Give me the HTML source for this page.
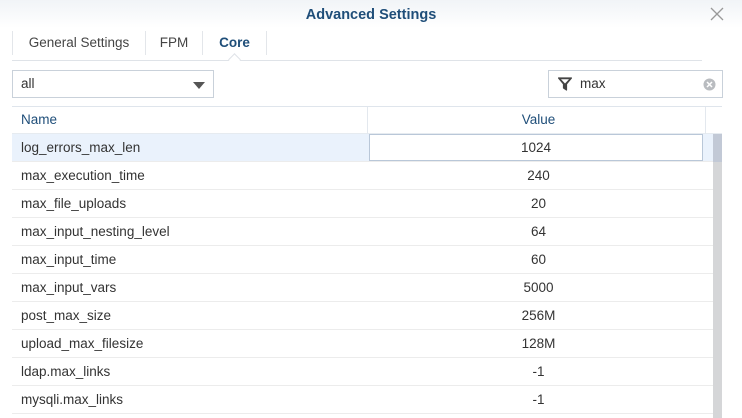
<!DOCTYPE html>
<html><head><style>
*{margin:0;padding:0;box-sizing:border-box}
body{width:742px;height:418px;overflow:hidden;background:#fff;font-family:"Liberation Sans",sans-serif;font-size:13.5px;color:#333;position:relative}
.title{position:absolute;left:0;top:0;width:742px;height:28px;background:linear-gradient(#f1f4f7,#fff);text-align:center;line-height:30px;font-weight:bold;font-size:14.5px;color:#1f4e79}
.close{position:absolute;right:18px;top:7px}
.tabs{position:absolute;left:12px;top:31px;height:30px;width:690px;border-bottom:1px solid #dfe3e8}
.tab{position:absolute;top:0;height:24px;line-height:24px;border-right:1px solid #e3e6ea;text-align:center;color:#444}
.dd{position:absolute;left:12px;top:70px;width:202px;height:28px;border:1px solid #c9d1da;line-height:26px;padding-left:8px}
.fb{position:absolute;left:548px;top:70px;width:175px;height:28px;border:1px solid #c9d1da;line-height:26px;padding-left:31px}
.th{position:absolute;left:12px;top:106px;width:710px;height:28px;border-top:1px solid #dfe5ec;border-bottom:1px solid #e6ebf0;color:#1f4e79;line-height:26px}
.row{position:absolute;left:12px;width:701px;height:28px;border-bottom:1px solid #ececec;line-height:27px}
.n{position:absolute;left:9px}
.v{position:absolute;left:358px;width:337px;text-align:center}
</style></head><body>
<div class="title">Advanced Settings</div>
<svg class="close" width="14" height="14" viewBox="0 0 14 14"><path d="M1 1L13 13M13 1L1 13" stroke="#999" stroke-width="1.3"/></svg>
<div class="tabs">
<div style="position:absolute;left:0;top:0;width:1px;height:24px;background:#e3e6ea"></div>
<div class="tab" style="left:1px;width:133px">General Settings</div>
<div class="tab" style="left:134px;width:57px">FPM</div>
<div class="tab" style="left:191px;width:64px;color:#1f4e79;font-weight:bold">Core</div>
<div style="position:absolute;left:218px;top:24px;width:9px;height:9px;background:#fff;border-left:1px solid #dfe3e8;border-top:1px solid #dfe3e8;transform:rotate(45deg)"></div>
</div>
<div class="dd">all<svg style="position:absolute;right:8px;top:11px" width="12" height="7"><path d="M0 0H12L6 7Z" fill="#555"/></svg></div>
<div class="fb"><svg style="position:absolute;left:9px;top:6px" width="14" height="14" viewBox="0 0 14 14"><path d="M0.5 1H13.5L8.5 7V13L5.5 11V7Z" fill="#444" stroke="#444" stroke-width="1.2" stroke-linejoin="round"/><path d="M3 2.2H11L7 6.5Z" fill="#fff"/></svg>max<svg style="position:absolute;right:6px;top:7px" width="13" height="13"><circle cx="6.5" cy="6.5" r="6" fill="#b9bcc0"/><path d="M4 4L9 9M9 4L4 9" stroke="#fff" stroke-width="1.5"/></svg></div>
<div class="th"><span style="position:absolute;left:9px">Name</span><span style="position:absolute;left:358px;width:337px;text-align:center">Value</span><div style="position:absolute;left:355px;top:0;width:1px;height:27px;background:#e3e8ee"></div><div style="position:absolute;left:693px;top:0;width:1px;height:27px;background:#e3e8ee"></div></div>
<div class="row" style="top:134px;background:#eaf2fc;width:710px"><span class="n">log_errors_max_len</span><div style="position:absolute;left:357px;top:0;width:334px;height:27px;background:#fff;border:1px solid #b9c7d8;text-align:center;line-height:25px">1024</div></div>
<div class="row" style="top:162px"><span class="n">max_execution_time</span><span class="v">240</span></div>
<div class="row" style="top:190px"><span class="n">max_file_uploads</span><span class="v">20</span></div>
<div class="row" style="top:218px"><span class="n">max_input_nesting_level</span><span class="v">64</span></div>
<div class="row" style="top:246px"><span class="n">max_input_time</span><span class="v">60</span></div>
<div class="row" style="top:274px"><span class="n">max_input_vars</span><span class="v">5000</span></div>
<div class="row" style="top:302px"><span class="n">post_max_size</span><span class="v">256M</span></div>
<div class="row" style="top:330px"><span class="n">upload_max_filesize</span><span class="v">128M</span></div>
<div class="row" style="top:358px"><span class="n">ldap.max_links</span><span class="v">-1</span></div>
<div class="row" style="top:386px"><span class="n">mysqli.max_links</span><span class="v">-1</span></div>
<div style="position:absolute;left:713px;top:134px;width:9px;height:284px;background:#d5d6d8;z-index:5"></div>
<div style="position:absolute;left:713px;top:134px;width:9px;height:28px;background:#c2c9d6;z-index:6"></div>
</body></html>
